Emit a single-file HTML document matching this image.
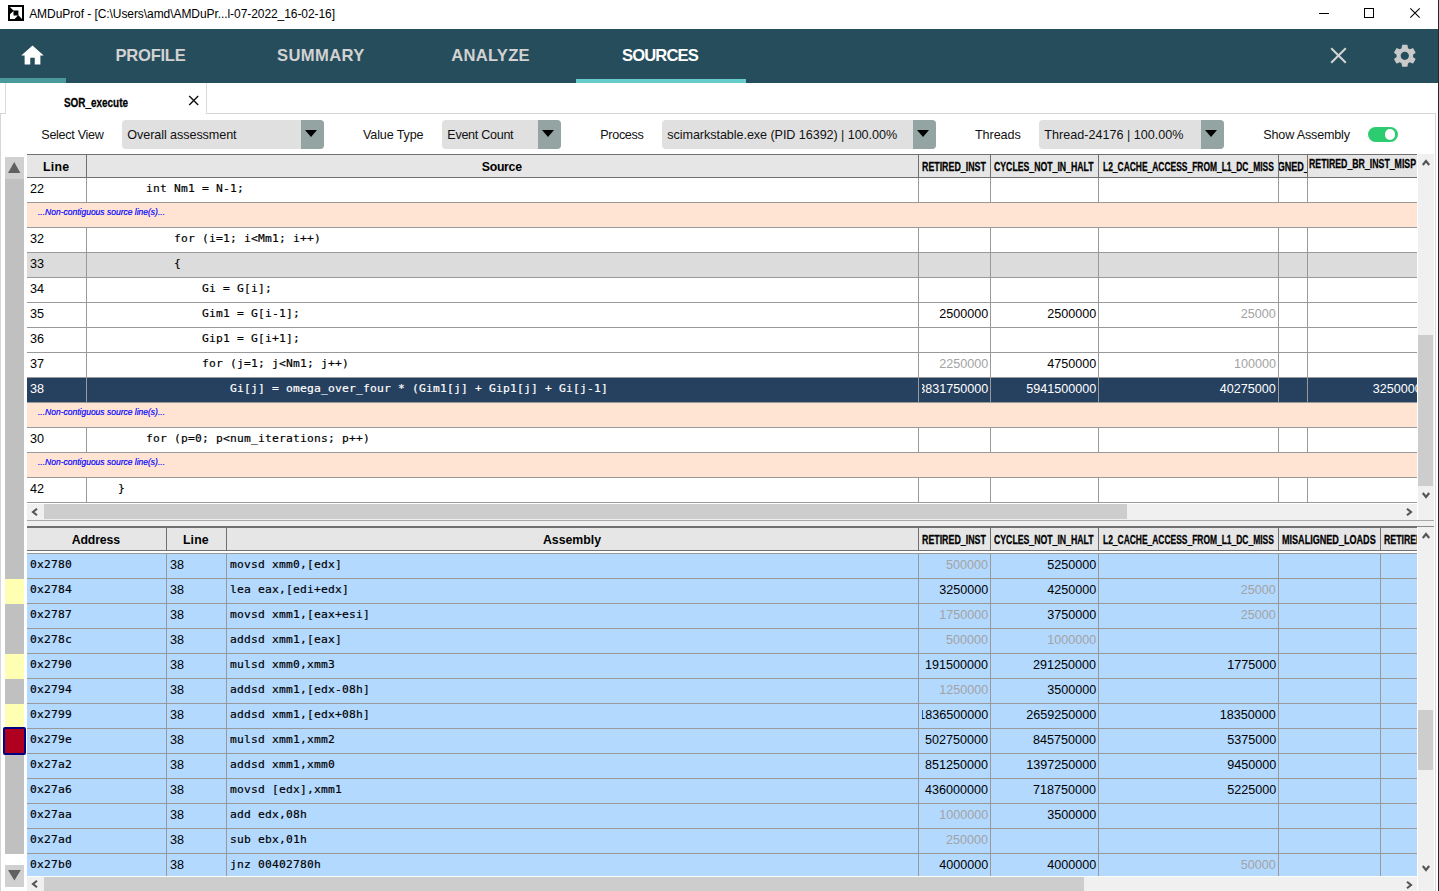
<!DOCTYPE html>
<html lang="en"><head><meta charset="utf-8"><title>AMDuProf</title><style>
*{box-sizing:border-box;margin:0;padding:0}
html,body{width:1439px;height:891px;overflow:hidden;background:#fff}
body{position:relative;font-family:"Liberation Sans",sans-serif;font-size:12.5px;color:#000}
.a{position:absolute}
.t{position:absolute;white-space:pre;line-height:1}
#nav{left:0;top:29px;width:1438px;height:54px;background:#264d5c}
.nt{position:absolute;top:47px;font-weight:bold;font-size:16.6px;line-height:18px;color:#d2d2d2;white-space:pre}
.lbl{position:absolute;top:128px;font-size:12.6px;line-height:15px;white-space:pre;color:#111}
.cb{position:absolute;top:120px;height:29px;background:#e0e0e0;border-radius:4px;overflow:hidden}
.cb i{position:absolute;right:0;top:0;width:23px;height:29px;background:#94a4a3}
.cb i:after{content:"";position:absolute;left:4px;top:10px;border-left:6.5px solid transparent;border-right:6.5px solid transparent;border-top:7px solid #000}
.cb span{position:absolute;left:5.3px;top:8px;font-size:12.6px;line-height:15px;white-space:pre;color:#111}
.tbl{position:absolute;left:27px;width:1390px;overflow:hidden}
.hd{position:absolute;left:0;top:0;width:1390px;background:#e6e6e6;border-top:1px solid #707070;border-bottom:1px solid #707070}
.hc{position:absolute;top:0;height:100%;border-right:1px solid #707070;overflow:hidden}
.hc b{position:absolute;font-size:12.3px;line-height:14px;white-space:pre}
.hc u{position:absolute;text-decoration:none;font-weight:bold;font-size:13.2px;line-height:14px;white-space:pre;transform-origin:0 0;-webkit-text-stroke:.3px #000}
.r{position:absolute;left:0;width:1390px;height:25px;border-bottom:1px solid #999;background:#fff}
.c{position:absolute;top:0;height:24px;border-right:1px solid #999;overflow:hidden;white-space:pre}
.c.n{font-size:13.2px;line-height:23px}
.c.n span{position:absolute;right:2.15px;top:-.8px;white-space:pre;transform:scaleX(.955);transform-origin:100% 50%}
.c.n i{font-style:normal;position:absolute;left:2.5px;right:0;top:0;bottom:0;overflow:hidden}
.c.l{padding-left:3px;font-size:12.67px;line-height:23px}
.c.m{padding-left:3px;font-family:"DejaVu Sans Mono","Liberation Mono",monospace;font-size:11.3px;letter-spacing:.197px;line-height:21px;-webkit-text-stroke:.18px currentColor}
.g{color:#a3a3a3}
.nc{background:#ffe4d4}
.nc span{position:absolute;left:10.8px;top:3.4px;font-style:italic;font-size:9.1px;line-height:12px;color:#0000ff;-webkit-text-stroke:.2px #0000ff;white-space:pre;transform-origin:0 0}
.sel{background:#26405f;color:#fff}
.alt{background:#dcdcdc}
.ar{background:#b3d9ff}
.sb{position:absolute;background:#f0f0f0}
.th{position:absolute;background:#cdcdcd}
</style></head><body>
<div class="a" style="left:8px;top:5px;width:16px;height:16px;background:#000"><svg width="16" height="16" viewBox="0 0 16 16"><path d="M1.9 1.9H14V14L10.4 10.3V5.5H5.5Z" fill="#fff"></path><path d="M2 9.3L5.5 6V10.4H9.9L6.6 14H2Z" fill="#fff"></path></svg></div>
<div class="t" style="left: 29.2px; top: 7px; font-size: 12px; line-height: 14px; letter-spacing: -0.07px;">AMDuProf - [C:\Users\amd\AMDuPr...l-07-2022_16-02-16]</div>
<svg class="a" style="left:1310px;top:0" width="128" height="29" viewBox="0 0 128 29"><path d="M9 13.5H19" stroke="#000" stroke-width="1" fill="none"></path><rect x="54.5" y="8.5" width="9" height="9" stroke="#000" stroke-width="1" fill="none"></rect><path d="M100.3 8.3L109.7 17.7M109.7 8.3L100.3 17.7" stroke="#000" stroke-width="1.05" fill="none"></path></svg>
<div id="nav" class="a"></div>
<div class="a" style="left:0;top:78px;width:66px;height:5px;background:#4a9a9d"></div>
<div class="a" style="left:576px;top:79px;width:170px;height:4px;background:#66cccc"></div>
<svg class="a" style="left:19px;top:42px" width="27" height="27" viewBox="0 0 24 24"><path d="M10 20v-6h4v6h5v-8h3L12 3 2 12h3v8z" fill="#fff"></path></svg>
<div class="nt" style="left: 115.5px; color: rgb(210, 210, 210); letter-spacing: -0.27px;">PROFILE</div>
<div class="nt" style="left: 277px; color: rgb(210, 210, 210); letter-spacing: 0.362px;">SUMMARY</div>
<div class="nt" style="left: 451.3px; color: rgb(210, 210, 210); letter-spacing: 0.243px;">ANALYZE</div>
<div class="nt" style="left: 622px; color: rgb(255, 255, 255); letter-spacing: -0.877px;">SOURCES</div>
<svg class="a" style="left:1328px;top:45px" width="21" height="21" viewBox="0 0 21 21"><path d="M3.2 3.2L17.8 17.8M17.8 3.2L3.2 17.8" stroke="#d2d2d2" stroke-width="2.1" fill="none"></path></svg>
<svg class="a" style="left:1390.6px;top:41.7px" width="27.6" height="27.6" viewBox="0 0 24 24"><path fill="#c9c9c9" d="M19.14,12.94c0.04-0.3,0.06-0.61,0.06-0.94c0-0.32-0.02-0.64-0.07-0.94l2.03-1.58c0.18-0.14,0.23-0.41,0.12-0.61 l-1.92-3.32c-0.12-0.22-0.37-0.29-0.59-0.22l-2.39,0.96c-0.5-0.38-1.03-0.7-1.62-0.94L14.4,2.81c-0.04-0.24-0.24-0.41-0.48-0.41 h-3.84c-0.24,0-0.43,0.17-0.47,0.41L9.25,5.35C8.66,5.59,8.12,5.92,7.63,6.29L5.24,5.33c-0.22-0.08-0.47,0-0.59,0.22L2.74,8.87 C2.62,9.08,2.66,9.34,2.86,9.48l2.03,1.58C4.84,11.36,4.8,11.69,4.8,12s0.02,0.64,0.07,0.94l-2.03,1.58 c-0.18,0.14-0.23,0.41-0.12,0.61l1.92,3.32c0.12,0.22,0.37,0.29,0.59,0.22l2.39-0.96c0.5,0.38,1.03,0.7,1.62,0.94l0.36,2.54 c0.05,0.24,0.24,0.41,0.48,0.41h3.84c0.24,0,0.44-0.17,0.47-0.41l0.36-2.54c0.59-0.24,1.13-0.56,1.62-0.94l2.39,0.96 c0.22,0.08,0.47,0,0.59-0.22l1.92-3.32c0.12-0.22,0.07-0.47-0.12-0.61L19.14,12.94z M12,15.6c-1.98,0-3.6-1.62-3.6-3.6 s1.62-3.6,3.6-3.6s3.6,1.62,3.6,3.6S13.98,15.6,12,15.6z"></path></svg>
<div class="a" style="left:1438px;top:0;width:1px;height:891px;background:#262626"></div>
<div class="a" style="left:0;top:113px;width:1436px;height:1px;background:#d6d6d6"></div>
<div class="a" style="left:0;top:113px;width:1px;height:778px;background:#d6d6d6"></div>
<div class="a" style="left:1435px;top:113px;width:1px;height:778px;background:#d6d6d6"></div>
<div class="a" style="left:5px;top:83px;width:202px;height:31px;background:#fff;border-left:1px solid #dadada;border-right:1px solid #dadada"></div>
<div class="t" style="left: 64px; top: 94.9px; font-weight: bold; font-size: 13.2px; line-height: 15px; transform-origin: 0px 0px; -webkit-text-stroke: 0.3px rgb(0, 0, 0); transform: scaleX(0.7527);">SOR_execute</div>
<svg class="a" style="left:187px;top:94px" width="13" height="13" viewBox="0 0 13 13"><path d="M2.2 2L11.2 11M11.2 2L2.2 11" stroke="#111" stroke-width="1.4" fill="none"></path></svg>
<div class="lbl" style="left: 41.3px; letter-spacing: -0.308px;">Select View</div>
<div class="lbl" style="left: 363px; letter-spacing: -0.151px;">Value Type</div>
<div class="lbl" style="left: 600.3px; letter-spacing: -0.333px;">Process</div>
<div class="lbl" style="left: 975px; letter-spacing: -0.084px;">Threads</div>
<div class="lbl" style="left: 1263.3px; letter-spacing: -0.184px;">Show Assembly</div>
<div class="cb" style="left:122px;width:202px"><span style="letter-spacing: -0.076px;">Overall assessment</span><i></i></div>
<div class="cb" style="left:442px;width:119px"><span style="letter-spacing: -0.301px;">Event Count</span><i></i></div>
<div class="cb" style="left:662px;width:274px"><span style="letter-spacing: -0.063px;">scimarkstable.exe (PID 16392) | 100.00%</span><i></i></div>
<div class="cb" style="left:1039px;width:185px"><span style="letter-spacing: 0px;">Thread-24176 | 100.00%</span><i></i></div>
<div class="a" style="left:1368px;top:127px;width:30px;height:15px;border-radius:7.5px;background:#2ecc71"><div class="a" style="left:17px;top:2px;width:10px;height:11px;border-radius:5px;background:#fff"></div></div>
<div class="a" style="left:5px;top:157px;width:19px;height:697px;background:#c0c0c0"></div>
<div class="a" style="left:5px;top:157px;width:19px;height:22px;background:#d0d0d0"></div>
<svg class="a" style="left:5px;top:157px" width="19" height="22" viewBox="0 0 19 22"><path d="M9.2 5L15.4 16H3Z" fill="#606060"></path></svg>
<div class="a" style="left:5px;top:579px;width:19px;height:25px;background:#ffffb4"></div>
<div class="a" style="left:5px;top:654px;width:19px;height:25px;background:#ffffb4"></div>
<div class="a" style="left:5px;top:704px;width:19px;height:25px;background:#ffffb4"></div>
<div class="a" style="left:3px;top:727px;width:23px;height:28px;background:#b00020;border:2px solid #000080;border-radius:2px"></div>
<div class="a" style="left:5px;top:865px;width:19px;height:22px;background:#d0d0d0"></div>
<svg class="a" style="left:5px;top:865px" width="19" height="22" viewBox="0 0 19 22"><path d="M3 5H15.8L9.4 15.6Z" fill="#606060"></path></svg>
<div class="tbl" style="top:154px;height:349px">
<div class="hd" style="height:24px">
<div class="hc" style="left:0px;width:60px"><b style="left: 16px; top: 5px; letter-spacing: 0.24px;">Line</b></div>
<div class="hc" style="left:60px;width:832px"><b style="left: 394.8px; top: 5px; letter-spacing: -0.301px;">Source</b></div>
<div class="hc" style="left:892px;width:72px"><u style="left: 3.1px; top: 4.85px; transform: scaleX(0.6697);">RETIRED_INST</u></div>
<div class="hc" style="left:964px;width:108px"><u style="left: 3.4px; top: 4.85px; transform: scaleX(0.6602);">CYCLES_NOT_IN_HALT</u></div>
<div class="hc" style="left:1072px;width:180px"><u style="left: 3.6px; top: 4.85px; transform: scaleX(0.6403);">L2_CACHE_ACCESS_FROM_L1_DC_MISS</u></div>
<div class="hc" style="left:1252px;width:29px"><u style="left: -31.8px; top: 4.85px; transform: scaleX(0.6875);">MISALIGNED_LOADS</u></div>
<div class="hc" style="left:1281px;width:110px;border-right:0"><u style="left: 0.5px; top: 1.95px; transform: scaleX(0.6637);">RETIRED_BR_INST_MISP</u></div>
</div>
<div class="r " style="top:24px">
<div class="c l" style="left:0px;width:60px">22</div>
<div class="c m" style="left:60px;width:832px">        int Nm1 = N-1;</div>
<div class="c n" style="left:892px;width:72px"></div>
<div class="c n" style="left:964px;width:108px"></div>
<div class="c n" style="left:1072px;width:180px"></div>
<div class="c n" style="left:1252px;width:29px"></div>
<div class="c n" style="left:1281px;width:110px;border-right:0"></div>
</div>
<div class="r nc" style="top:49px"><span style="transform: scaleX(0.934);">...Non-contiguous source line(s)...</span></div>
<div class="r " style="top:74px">
<div class="c l" style="left:0px;width:60px">32</div>
<div class="c m" style="left:60px;width:832px">            for (i=1; i&lt;Mm1; i++)</div>
<div class="c n" style="left:892px;width:72px"></div>
<div class="c n" style="left:964px;width:108px"></div>
<div class="c n" style="left:1072px;width:180px"></div>
<div class="c n" style="left:1252px;width:29px"></div>
<div class="c n" style="left:1281px;width:110px;border-right:0"></div>
</div>
<div class="r alt" style="top:99px">
<div class="c l" style="left:0px;width:60px">33</div>
<div class="c m" style="left:60px;width:832px">            {</div>
<div class="c n" style="left:892px;width:72px"></div>
<div class="c n" style="left:964px;width:108px"></div>
<div class="c n" style="left:1072px;width:180px"></div>
<div class="c n" style="left:1252px;width:29px"></div>
<div class="c n" style="left:1281px;width:110px;border-right:0"></div>
</div>
<div class="r " style="top:124px">
<div class="c l" style="left:0px;width:60px">34</div>
<div class="c m" style="left:60px;width:832px">                Gi = G[i];</div>
<div class="c n" style="left:892px;width:72px"></div>
<div class="c n" style="left:964px;width:108px"></div>
<div class="c n" style="left:1072px;width:180px"></div>
<div class="c n" style="left:1252px;width:29px"></div>
<div class="c n" style="left:1281px;width:110px;border-right:0"></div>
</div>
<div class="r " style="top:149px">
<div class="c l" style="left:0px;width:60px">35</div>
<div class="c m" style="left:60px;width:832px">                Gim1 = G[i-1];</div>
<div class="c n" style="left:892px;width:72px"><span>2500000</span></div>
<div class="c n" style="left:964px;width:108px"><span>2500000</span></div>
<div class="c n g" style="left:1072px;width:180px"><span>25000</span></div>
<div class="c n" style="left:1252px;width:29px"></div>
<div class="c n" style="left:1281px;width:110px;border-right:0"></div>
</div>
<div class="r " style="top:174px">
<div class="c l" style="left:0px;width:60px">36</div>
<div class="c m" style="left:60px;width:832px">                Gip1 = G[i+1];</div>
<div class="c n" style="left:892px;width:72px"></div>
<div class="c n" style="left:964px;width:108px"></div>
<div class="c n" style="left:1072px;width:180px"></div>
<div class="c n" style="left:1252px;width:29px"></div>
<div class="c n" style="left:1281px;width:110px;border-right:0"></div>
</div>
<div class="r " style="top:199px">
<div class="c l" style="left:0px;width:60px">37</div>
<div class="c m" style="left:60px;width:832px">                for (j=1; j&lt;Nm1; j++)</div>
<div class="c n g" style="left:892px;width:72px"><span>2250000</span></div>
<div class="c n" style="left:964px;width:108px"><span>4750000</span></div>
<div class="c n g" style="left:1072px;width:180px"><span>100000</span></div>
<div class="c n" style="left:1252px;width:29px"></div>
<div class="c n" style="left:1281px;width:110px;border-right:0"></div>
</div>
<div class="r sel" style="top:224px">
<div class="c l" style="left:0px;width:60px">38</div>
<div class="c m" style="left:60px;width:832px">                    Gi[j] = omega_over_four * (Gim1[j] + Gip1[j] + Gi[j-1]</div>
<div class="c n" style="left:892px;width:72px"><i><span>3831750000</span></i></div>
<div class="c n" style="left:964px;width:108px"><i><span>5941500000</span></i></div>
<div class="c n" style="left:1072px;width:180px"><span>40275000</span></div>
<div class="c n" style="left:1252px;width:29px"></div>
<div class="c n" style="left:1281px;width:110px;border-right:0"><span style="right:-10.8px">32500000</span></div>
</div>
<div class="r nc" style="top:249px"><span style="transform: scaleX(0.934);">...Non-contiguous source line(s)...</span></div>
<div class="r " style="top:274px">
<div class="c l" style="left:0px;width:60px">30</div>
<div class="c m" style="left:60px;width:832px">        for (p=0; p&lt;num_iterations; p++)</div>
<div class="c n" style="left:892px;width:72px"></div>
<div class="c n" style="left:964px;width:108px"></div>
<div class="c n" style="left:1072px;width:180px"></div>
<div class="c n" style="left:1252px;width:29px"></div>
<div class="c n" style="left:1281px;width:110px;border-right:0"></div>
</div>
<div class="r nc" style="top:299px"><span style="transform: scaleX(0.934);">...Non-contiguous source line(s)...</span></div>
<div class="r " style="top:324px">
<div class="c l" style="left:0px;width:60px">42</div>
<div class="c m" style="left:60px;width:832px">    }</div>
<div class="c n" style="left:892px;width:72px"></div>
<div class="c n" style="left:964px;width:108px"></div>
<div class="c n" style="left:1072px;width:180px"></div>
<div class="c n" style="left:1252px;width:29px"></div>
<div class="c n" style="left:1281px;width:110px;border-right:0"></div>
</div>
</div>
<div class="sb" style="left:1418px;top:154px;width:16px;height:366px"></div>
<div class="th" style="left:1418px;top:335px;width:15px;height:151px"></div>
<svg class="a" style="left:1419.5px;top:157.1px" width="12" height="12" viewBox="0 0 12 12"><path d="M2.8 8.0L6 4.0L9.2 8.0" stroke="#555" stroke-width="2.1" fill="none"></path></svg>
<svg class="a" style="left:1419.5px;top:489px" width="12" height="12" viewBox="0 0 12 12"><path d="M2.8 4.0L6 8.0L9.2 4.0" stroke="#555" stroke-width="2.1" fill="none"></path></svg>
<div class="sb" style="left:27px;top:504px;width:1390px;height:16px"></div>
<div class="th" style="left:44px;top:504px;width:1083px;height:15px"></div>
<svg class="a" style="left:29.1px;top:505.6px" width="12" height="12" viewBox="0 0 12 12"><path d="M8.0 2.8L4.0 6L8.0 9.2" stroke="#555" stroke-width="2.1" fill="none"></path></svg>
<svg class="a" style="left:1402.9px;top:505.5px" width="12" height="12" viewBox="0 0 12 12"><path d="M4.0 2.8L8.0 6L4.0 9.2" stroke="#555" stroke-width="2.1" fill="none"></path></svg>
<div class="a" style="left:27px;top:520px;width:1407px;height:1px;background:#a8a8a8"></div>
<div class="a" style="left:27px;top:521px;width:1407px;height:5px;background:#f0f0f0"></div>
<div class="a" style="left:27px;top:526px;width:1407px;height:1px;background:#8a8a8a"></div>
<div class="tbl" style="top:526px;height:350px">
<div class="hd" style="height:25px;border-top-width:2px">
<div class="hc" style="left:0px;width:140px"><b style="left: 44.8px; top: 5px; letter-spacing: -0.17px;">Address</b></div>
<div class="hc" style="left:140px;width:60px"><b style="left: 16px; top: 5px; letter-spacing: 0.106px;">Line</b></div>
<div class="hc" style="left:200px;width:692px"><b style="left: 316px; top: 5px; letter-spacing: -0.016px;">Assembly</b></div>
<div class="hc" style="left:892px;width:72px"><u style="left: 3.1px; top: 4.85px; transform: scaleX(0.6697);">RETIRED_INST</u></div>
<div class="hc" style="left:964px;width:108px"><u style="left: 3.4px; top: 4.85px; transform: scaleX(0.6602);">CYCLES_NOT_IN_HALT</u></div>
<div class="hc" style="left:1072px;width:180px"><u style="left: 3.6px; top: 4.85px; transform: scaleX(0.6403);">L2_CACHE_ACCESS_FROM_L1_DC_MISS</u></div>
<div class="hc" style="left:1252px;width:102px"><u style="left: 3px; top: 4.85px; transform: scaleX(0.6875);">MISALIGNED_LOADS</u></div>
<div class="hc" style="left:1354px;width:37px;border-right:0"><u style="left: 3px; top: 4.85px; transform: scaleX(0.6637);">RETIRED_BR_INST_MISP</u></div>
</div>
<div class="a" style="left:0;top:25px;width:1390px;height:2px;background:#fff"></div>
<div class="a" style="left:0;top:27px;width:1390px;height:1px;background:#999"></div>
<div class="r ar" style="top:28px">
<div class="c m" style="left:0px;width:140px">0x2780</div>
<div class="c l" style="left:140px;width:60px">38</div>
<div class="c m" style="left:200px;width:692px">movsd xmm0,[edx]</div>
<div class="c n g" style="left:892px;width:72px"><span>500000</span></div>
<div class="c n" style="left:964px;width:108px"><span>5250000</span></div>
<div class="c n" style="left:1072px;width:180px"></div>
<div class="c n" style="left:1252px;width:102px"></div>
<div class="c n" style="left:1354px;width:37px;border-right:0"></div>
</div>
<div class="r ar" style="top:53px">
<div class="c m" style="left:0px;width:140px">0x2784</div>
<div class="c l" style="left:140px;width:60px">38</div>
<div class="c m" style="left:200px;width:692px">lea eax,[edi+edx]</div>
<div class="c n" style="left:892px;width:72px"><span>3250000</span></div>
<div class="c n" style="left:964px;width:108px"><span>4250000</span></div>
<div class="c n g" style="left:1072px;width:180px"><span>25000</span></div>
<div class="c n" style="left:1252px;width:102px"></div>
<div class="c n" style="left:1354px;width:37px;border-right:0"></div>
</div>
<div class="r ar" style="top:78px">
<div class="c m" style="left:0px;width:140px">0x2787</div>
<div class="c l" style="left:140px;width:60px">38</div>
<div class="c m" style="left:200px;width:692px">movsd xmm1,[eax+esi]</div>
<div class="c n g" style="left:892px;width:72px"><span>1750000</span></div>
<div class="c n" style="left:964px;width:108px"><span>3750000</span></div>
<div class="c n g" style="left:1072px;width:180px"><span>25000</span></div>
<div class="c n" style="left:1252px;width:102px"></div>
<div class="c n" style="left:1354px;width:37px;border-right:0"></div>
</div>
<div class="r ar" style="top:103px">
<div class="c m" style="left:0px;width:140px">0x278c</div>
<div class="c l" style="left:140px;width:60px">38</div>
<div class="c m" style="left:200px;width:692px">addsd xmm1,[eax]</div>
<div class="c n g" style="left:892px;width:72px"><span>500000</span></div>
<div class="c n g" style="left:964px;width:108px"><span>1000000</span></div>
<div class="c n" style="left:1072px;width:180px"></div>
<div class="c n" style="left:1252px;width:102px"></div>
<div class="c n" style="left:1354px;width:37px;border-right:0"></div>
</div>
<div class="r ar" style="top:128px">
<div class="c m" style="left:0px;width:140px">0x2790</div>
<div class="c l" style="left:140px;width:60px">38</div>
<div class="c m" style="left:200px;width:692px">mulsd xmm0,xmm3</div>
<div class="c n" style="left:892px;width:72px"><span>191500000</span></div>
<div class="c n" style="left:964px;width:108px"><span>291250000</span></div>
<div class="c n" style="left:1072px;width:180px"><span>1775000</span></div>
<div class="c n" style="left:1252px;width:102px"></div>
<div class="c n" style="left:1354px;width:37px;border-right:0"></div>
</div>
<div class="r ar" style="top:153px">
<div class="c m" style="left:0px;width:140px">0x2794</div>
<div class="c l" style="left:140px;width:60px">38</div>
<div class="c m" style="left:200px;width:692px">addsd xmm1,[edx-08h]</div>
<div class="c n g" style="left:892px;width:72px"><span>1250000</span></div>
<div class="c n" style="left:964px;width:108px"><span>3500000</span></div>
<div class="c n" style="left:1072px;width:180px"></div>
<div class="c n" style="left:1252px;width:102px"></div>
<div class="c n" style="left:1354px;width:37px;border-right:0"></div>
</div>
<div class="r ar" style="top:178px">
<div class="c m" style="left:0px;width:140px">0x2799</div>
<div class="c l" style="left:140px;width:60px">38</div>
<div class="c m" style="left:200px;width:692px">addsd xmm1,[edx+08h]</div>
<div class="c n" style="left:892px;width:72px"><i><span>1836500000</span></i></div>
<div class="c n" style="left:964px;width:108px"><i><span>2659250000</span></i></div>
<div class="c n" style="left:1072px;width:180px"><span>18350000</span></div>
<div class="c n" style="left:1252px;width:102px"></div>
<div class="c n" style="left:1354px;width:37px;border-right:0"></div>
</div>
<div class="r ar" style="top:203px">
<div class="c m" style="left:0px;width:140px">0x279e</div>
<div class="c l" style="left:140px;width:60px">38</div>
<div class="c m" style="left:200px;width:692px">mulsd xmm1,xmm2</div>
<div class="c n" style="left:892px;width:72px"><span>502750000</span></div>
<div class="c n" style="left:964px;width:108px"><span>845750000</span></div>
<div class="c n" style="left:1072px;width:180px"><span>5375000</span></div>
<div class="c n" style="left:1252px;width:102px"></div>
<div class="c n" style="left:1354px;width:37px;border-right:0"></div>
</div>
<div class="r ar" style="top:228px">
<div class="c m" style="left:0px;width:140px">0x27a2</div>
<div class="c l" style="left:140px;width:60px">38</div>
<div class="c m" style="left:200px;width:692px">addsd xmm1,xmm0</div>
<div class="c n" style="left:892px;width:72px"><span>851250000</span></div>
<div class="c n" style="left:964px;width:108px"><i><span>1397250000</span></i></div>
<div class="c n" style="left:1072px;width:180px"><span>9450000</span></div>
<div class="c n" style="left:1252px;width:102px"></div>
<div class="c n" style="left:1354px;width:37px;border-right:0"></div>
</div>
<div class="r ar" style="top:253px">
<div class="c m" style="left:0px;width:140px">0x27a6</div>
<div class="c l" style="left:140px;width:60px">38</div>
<div class="c m" style="left:200px;width:692px">movsd [edx],xmm1</div>
<div class="c n" style="left:892px;width:72px"><span>436000000</span></div>
<div class="c n" style="left:964px;width:108px"><span>718750000</span></div>
<div class="c n" style="left:1072px;width:180px"><span>5225000</span></div>
<div class="c n" style="left:1252px;width:102px"></div>
<div class="c n" style="left:1354px;width:37px;border-right:0"></div>
</div>
<div class="r ar" style="top:278px">
<div class="c m" style="left:0px;width:140px">0x27aa</div>
<div class="c l" style="left:140px;width:60px">38</div>
<div class="c m" style="left:200px;width:692px">add edx,08h</div>
<div class="c n g" style="left:892px;width:72px"><span>1000000</span></div>
<div class="c n" style="left:964px;width:108px"><span>3500000</span></div>
<div class="c n" style="left:1072px;width:180px"></div>
<div class="c n" style="left:1252px;width:102px"></div>
<div class="c n" style="left:1354px;width:37px;border-right:0"></div>
</div>
<div class="r ar" style="top:303px">
<div class="c m" style="left:0px;width:140px">0x27ad</div>
<div class="c l" style="left:140px;width:60px">38</div>
<div class="c m" style="left:200px;width:692px">sub ebx,01h</div>
<div class="c n g" style="left:892px;width:72px"><span>250000</span></div>
<div class="c n" style="left:964px;width:108px"></div>
<div class="c n" style="left:1072px;width:180px"></div>
<div class="c n" style="left:1252px;width:102px"></div>
<div class="c n" style="left:1354px;width:37px;border-right:0"></div>
</div>
<div class="r ar" style="top:328px">
<div class="c m" style="left:0px;width:140px">0x27b0</div>
<div class="c l" style="left:140px;width:60px">38</div>
<div class="c m" style="left:200px;width:692px">jnz 00402780h</div>
<div class="c n" style="left:892px;width:72px"><span>4000000</span></div>
<div class="c n" style="left:964px;width:108px"><span>4000000</span></div>
<div class="c n g" style="left:1072px;width:180px"><span>50000</span></div>
<div class="c n" style="left:1252px;width:102px"></div>
<div class="c n" style="left:1354px;width:37px;border-right:0"></div>
</div>
</div>
<div class="sb" style="left:1418px;top:527px;width:16px;height:364px"></div>
<div class="th" style="left:1418px;top:710px;width:15px;height:60px"></div>
<svg class="a" style="left:1419.5px;top:530px" width="12" height="12" viewBox="0 0 12 12"><path d="M2.8 8.0L6 4.0L9.2 8.0" stroke="#555" stroke-width="2.1" fill="none"></path></svg>
<svg class="a" style="left:1419.5px;top:862px" width="12" height="12" viewBox="0 0 12 12"><path d="M2.8 4.0L6 8.0L9.2 4.0" stroke="#555" stroke-width="2.1" fill="none"></path></svg>
<div class="sb" style="left:27px;top:877px;width:1390px;height:14px"></div>
<div class="th" style="left:44px;top:877px;width:1040px;height:14px"></div>
<svg class="a" style="left:29.1px;top:878.4px" width="12" height="12" viewBox="0 0 12 12"><path d="M8.0 2.8L4.0 6L8.0 9.2" stroke="#555" stroke-width="2.1" fill="none"></path></svg>
<svg class="a" style="left:1402.9px;top:878.5px" width="12" height="12" viewBox="0 0 12 12"><path d="M4.0 2.8L8.0 6L4.0 9.2" stroke="#555" stroke-width="2.1" fill="none"></path></svg>
</body></html>
